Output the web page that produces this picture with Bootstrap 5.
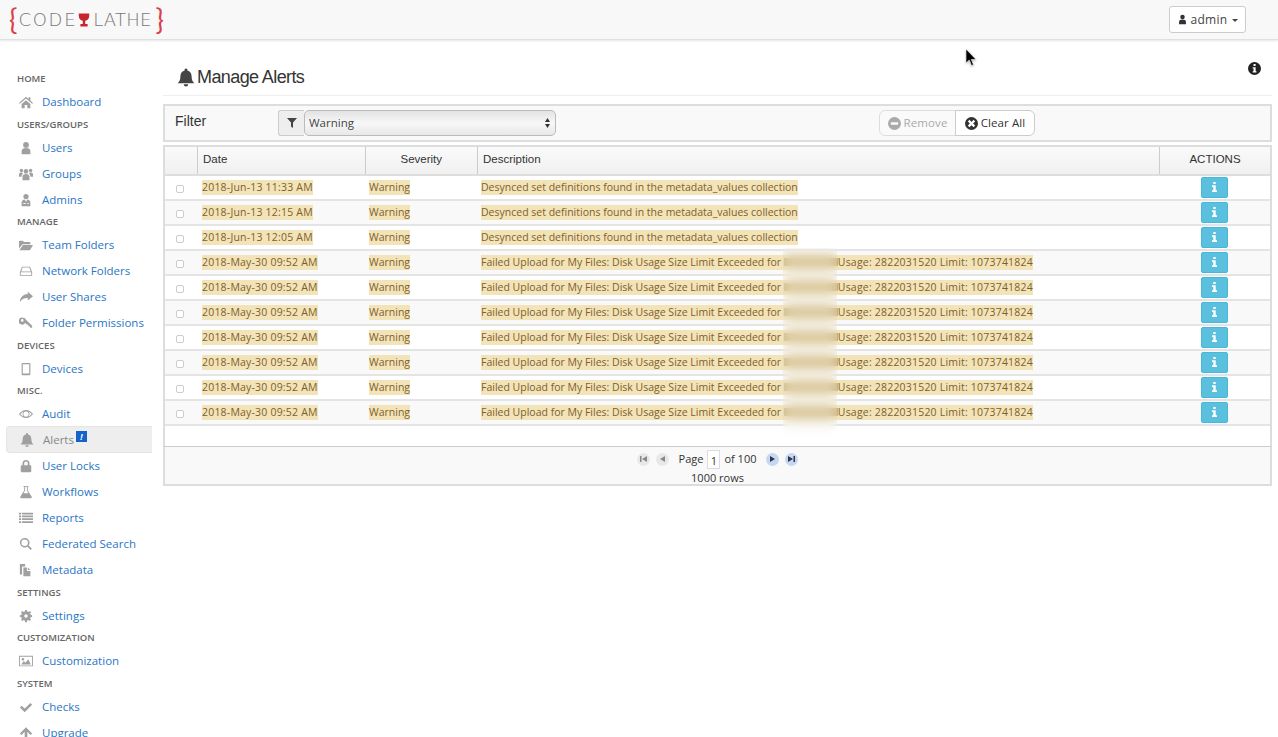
<!DOCTYPE html>
<html lang="en"><head><meta charset="utf-8"><title>Manage Alerts</title>
<link rel="stylesheet" href="https://cdn.jsdelivr.net/npm/bootstrap@5.3.0/dist/css/bootstrap.min.css">
<style>
html,body{height:737px;overflow:hidden}
body{font-family:"Open Sans",sans-serif;font-size:12px;color:#333;background:#fff;position:relative}
.topbar{height:40px;background:#f8f8f8;border-bottom:1px solid #e0e0e0;box-shadow:0 1px 2px rgba(0,0,0,.1);padding:0 32px 0 9px}
.logo{font-family:"DejaVu Sans",sans-serif;font-weight:200;font-size:18px;color:#777;line-height:1;white-space:nowrap}
.logo b{font-family:"Lato",sans-serif;font-weight:400;color:#dc3f4a;font-size:28px;position:relative;top:-1px}
.logo-a{letter-spacing:1.7px;margin-left:1px}
.logo-b{letter-spacing:.2px;margin-left:3px}
.logo svg{margin-left:1px}
.admin-btn{font-size:12px;height:27px;width:77px;padding:0;color:#444;background:#fff;border:1px solid #ccc;border-radius:3px;letter-spacing:.3px}
.admin-btn svg{width:11px;height:11px;fill:#333;margin-right:2px;vertical-align:-1px}
.caret-mark{display:inline-block;border:3.5px solid transparent;border-top-color:#444;border-bottom:0;margin-left:4px;vertical-align:2px}
.side{width:163px;flex:none;padding-top:29px}
.side-head{height:19.5px;line-height:20px;padding-left:17px;font-size:9.5px;font-weight:600;color:#666;text-transform:uppercase}
.side-link{display:flex;align-items:center;height:26px;padding:1px 0 0 19px;color:#2a76c6;text-decoration:none;font-size:11.5px}
.side-link svg{width:14px;height:14px;fill:#a0a0a0;flex:none;margin-right:9px}
.side-link.on{height:27px;margin:-1px 11px 0 6px;padding-left:13px;background:#eee;border:1px solid #e5e5e5;border-right:0;border-radius:4px 0 0 4px;color:#888}
.side-link.on svg{margin-right:9px}
.flag{background:#1463c8;color:#fff;font-size:8px;font-style:italic;font-weight:700;width:11px;height:11px;line-height:11px;text-align:center;margin:-7px 0 0 2px}
.main-col{flex:1;min-width:0;padding:0 6px 0 0}
.page-title{height:56px;border-bottom:1px solid #eee;padding:25px 0 0 14px;position:relative}
.page-title h1{font-family:"Liberation Sans",sans-serif;font-size:18px;font-weight:400;letter-spacing:-.6px;margin:0;color:#333;line-height:24px;display:flex;align-items:center;gap:2px}
.page-title h1 svg{width:18px;height:19px;fill:#444}
.info-mark{position:absolute;right:11px;top:22px;width:13px;height:13px;fill:#222}
.filter-box{height:38px;margin-top:8px;border:2px solid #ddd;background:#f9f9f9;padding:0 235px 0 10px}
.filter-label{font-family:"Liberation Sans",sans-serif;font-size:14px;width:103px;margin-top:-3px}
.funnel{width:26px;height:26px;background:#eee;border:1px solid #ccc;border-right:0;border-radius:3px 0 0 3px}
.funnel svg{width:10px;height:10px;fill:#444}
.pick{width:252px;height:26px;font-size:11.5px;padding:0 4px;color:#444;border:1px solid #bbb;border-radius:5px;background:linear-gradient(#e3e3e3,#f7f7f7 50%,#e8e8e8)}
.pick svg{width:7px;height:12px;fill:#333}
.act-btn{height:26px;font-size:11.5px;letter-spacing:.1px;padding:0;border:1px solid #ccc;background:#fff;color:#333;display:flex;align-items:center;justify-content:center;gap:3px;--bs-btn-disabled-opacity:1}
.act-btn svg{width:13px;height:13px;fill:#333}
.act-btn.off{width:77px;color:#aaa;border-color:#ddd;background:#fafafa}
.act-btn.off svg{fill:#aaa}
.act-btn.clr{width:80px}
.grid-wrap{margin-top:3px;border:2px solid #ddd;height:301px;border-bottom:0}
.alert-grid{table-layout:fixed;width:100%;margin:0;border-collapse:collapse;font-size:10.5px}
.alert-grid th{height:28px;padding:0 5px 2px 5.5px;font-family:"Liberation Sans",sans-serif;font-size:11.5px;font-weight:400;color:#333;background:linear-gradient(#fafafa,#f0f0f0);border-bottom:2px solid #ddd;border-right:1px solid #ccc;vertical-align:middle}
.alert-grid th:last-child{border-right:0;text-align:center}
.alert-grid td{height:25px;padding:0 4px;border-bottom:2px solid #e4e4e4;vertical-align:middle;white-space:nowrap;overflow:hidden;color:#7d5f2c}
.alert-grid td:nth-child(2){padding-left:5px;letter-spacing:.2px}
.alert-grid tr:nth-child(even) td{background:#f9f9f9}
.alert-grid td:first-child{padding:3px 0 0 11px}
.alert-grid td:last-child{text-align:center;padding:0 0 1px}
.hl{background:#f3e3b8;padding:0;display:inline-block;line-height:15px}
.hide{display:inline-block;width:54px;height:8px;background:#c9b27e}
.nums{letter-spacing:.2px}
.tick{display:block;width:8px;height:8px;border:1px solid #ccc;border-radius:2px;background:#fff}
.i-btn{width:27px;height:21px;padding:0;background:#5bc0de;border:1px solid #46b8da;border-radius:2px;display:inline-flex;align-items:center;justify-content:center;vertical-align:middle}
.i-btn svg{width:5px;height:10px;fill:#fff}
.grid-foot{height:40px;border:2px solid #ddd;border-top:1px solid #ccc;background:#f9f9f9;font-size:11px;color:#333}
.pager{height:24px;gap:6px}
.pg{width:13px;height:13px;border-radius:50%;background:#e8e8e8;flex:none;display:flex;align-items:center;justify-content:center}
.pg svg{width:7px;height:6px;fill:#888}
.pg.go{background:#c5d8f0}.pg.go svg{fill:#335}
.pg-box{width:13px;height:19px;border:1px solid #ddd;background:#fff;text-align:center;line-height:19px;margin:0 -2px}
.foot-count{line-height:14px}
.veil{position:absolute;left:783px;top:248px;width:54px;height:197px;backdrop-filter:blur(6px);pointer-events:none}
.pointer{position:absolute;left:966px;top:49px;width:11px;height:17px;filter:drop-shadow(0 1px 1px rgba(0,0,0,.3))}
</style></head><body>
<svg width="0" height="0" class="d-none"><defs>
<symbol id="i-home" viewBox="0 0 16 14"><path d="M8 1 0 8l1 1 7-6 7 6 1-1-3-2.6V1.500h-2v2.200zM3 9.200 8 5l5 4.200V14H9.500v-3.500h-3V14H3z"/></symbol>
<symbol id="i-user" viewBox="0 0 16 14"><circle cx="8" cy="3.500" r="3.300"/><path d="M3 14v-3.500C3 8 5 7 8 7s5 1 5 3.500V14z"/></symbol>
<symbol id="i-group" viewBox="0 0 16 14"><circle cx="8" cy="4" r="2.600"/><circle cx="2.800" cy="3" r="2"/><circle cx="13.200" cy="3" r="2"/><path d="M4 14v-4c0-2 1.500-3 4-3s4 1 4 3v4zM0 10V7c0-1 1-1.700 3-1.700.8 0 1.300.3 1.700.7C3.500 7 3 8.200 3 10zM16 10V7c0-1-1-1.700-3-1.700-.8 0-1.300.3-1.700.7 1.200 1 1.700 2.200 1.700 4z"/></symbol>
<symbol id="i-md" viewBox="0 0 16 14"><circle cx="8" cy="3" r="3"/><path d="M3 14v-4c0-2 1.500-3.300 3.500-3.500L8 9l1.500-2.500c2 .2 3.500 1.500 3.500 3.500v4zm2-2.500h2.500v-1H5zm4.500 0H11v-1H9.500z"/></symbol>
<symbol id="i-open" viewBox="0 0 16 14"><path d="M0 11V3c0-.6.400-1 1-1h3.500l1.200 1.500H12c.6 0 1 .4 1 1V6H4L0 11zM4.500 7H16l-3.500 6H.5z"/></symbol>
<symbol id="i-hdd" viewBox="0 0 16 14"><path fill-rule="evenodd" d="M3.500 2h9L15 8v4.500H1V8zm.7 1L2.500 7.500h11L11.800 3zM2 8.500v3h12v-3z"/></symbol>
<symbol id="i-share" viewBox="0 0 16 14"><path d="M10 1l6 5-6 5V8C6 8 3 9 1 13c0-5 3-9 9-9.500z"/></symbol>
<symbol id="i-key" viewBox="0 0 16 14"><path fill-rule="evenodd" d="M4.500 1a4 4 0 0 1 3.700 2.500L15 10v2.500h-2l-.5-1.500-1.500-.3L10.500 9 9 8.700 7 7a4 4 0 1 1-2.500-6zM3.700 2.500a1.500 1.500 0 1 0 0 3 1.500 1.500 0 0 0 0-3z"/></symbol>
<symbol id="i-tablet" viewBox="0 0 16 14"><path fill-rule="evenodd" d="M4 0h8c.6 0 1 .4 1 1v12c0 .6-.4 1-1 1H4c-.6 0-1-.4-1-1V1c0-.6.400-1 1-1zm.300 1.500v10.500h7.400V1.500z"/></symbol>
<symbol id="i-eye" viewBox="0 0 16 14"><path fill-rule="evenodd" d="M8 2.500c3.500 0 6.300 2 8 4.500-1.700 2.500-4.500 4.500-8 4.500S1.700 9.500 0 7c1.700-2.500 4.500-4.500 8-4.500zM8 4a3 3 0 1 0 0 6 3 3 0 0 0 0-6zM1.500 7c1.200 1.500 2.600 2.500 4 3.200C4.500 9.400 4 8.300 4 7s.5-2.400 1.500-3.200C4.100 4.500 2.700 5.500 1.500 7zm13 0c-1.200-1.500-2.600-2.500-4-3.200 1 .8 1.500 1.900 1.500 3.200s-.5 2.400-1.500 3.200c1.400-.7 2.800-1.700 4-3.200z"/></symbol>
<symbol id="i-bell" viewBox="0 0 16 16"><path d="M8 0a1.300 1.300 0 0 1 1.200 1.700C11.500 2.300 13 4.200 13 7c0 3 .8 4.500 2.500 6H.5C2.200 11.500 3 10 3 7c0-2.800 1.500-4.700 3.800-5.300A1.300 1.300 0 0 1 8 0zM6 14h4a2 2 0 0 1-4 0z"/></symbol>
<symbol id="i-lock" viewBox="0 0 16 14"><path fill-rule="evenodd" d="M8 0c2.500 0 4 1.500 4 4v2h1c.4 0 1 .4 1 1v6c0 .6-.6 1-1 1H3c-.4 0-1-.4-1-1V7c0-.6.6-1 1-1h1V4c0-2.500 1.500-4 4-4zM8 1.800C6.600 1.800 6 2.700 6 4v2h4V4c0-1.300-.6-2.200-2-2.200z"/></symbol>
<symbol id="i-flask" viewBox="0 0 16 14"><path fill-rule="evenodd" d="M5 0h6v1h-1v4l4.500 7.500c.4.800 0 1.500-1 1.500h-11c-1 0-1.400-.7-1-1.500L6 5V1H5zm2 1v4.300L5.200 8.500h5.600L9 5.300V1z"/></symbol>
<symbol id="i-list" viewBox="0 0 16 14"><path d="M0 1h2.500v2H0zm3.500 0H16v2H3.500zM0 4.200h2.500v2H0zm3.500 0H16v2H3.500zM0 7.400h2.500v2H0zm3.500 0H16v2H3.500zM0 10.600h2.500v2H0zm3.500 0H16v2H3.500z"/></symbol>
<symbol id="i-search" viewBox="0 0 16 14"><path fill-rule="evenodd" d="M6.500 0a5.500 5.500 0 0 1 4.500 8.700l3.800 3.800-1.400 1.400-3.800-3.800A5.500 5.500 0 1 1 6.500 0zm0 1.800a3.700 3.700 0 1 0 0 7.400 3.700 3.700 0 0 0 0-7.400z"/></symbol>
<symbol id="i-copy" viewBox="0 0 16 14"><path d="M1 0h6v3H4.500C4 3 3.500 3.500 3.500 4v8H1zM5 4h4v4h4v6H5zM10 4.200 13 7h-3z"/></symbol>
<symbol id="i-cog" viewBox="0 0 16 14"><path fill-rule="evenodd" d="M7 0h2l.4 1.800 1.300.5 1.600-1 1.400 1.400-1 1.600.5 1.300 1.800.4v2l-1.800.4-.5 1.300 1 1.600-1.400 1.400-1.600-1-1.300.5L9 14H7l-.4-1.800-1.300-.5-1.600 1-1.400-1.400 1-1.600-.5-1.300L1 8V6l1.800-.4.500-1.300-1-1.600 1.400-1.400 1.600 1 1.300-.5zM8 5a2 2 0 1 0 0 4 2 2 0 0 0 0-4z"/></symbol>
<symbol id="i-pic" viewBox="0 0 16 14"><path fill-rule="evenodd" d="M0 1h16v12H0zm1 1v10h14V2zm1.500 9 3-4 2 2 3-4 3 6zM4.500 3.500a1.500 1.500 0 1 1 0 3 1.500 1.500 0 0 1 0-3z"/></symbol>
<symbol id="i-ok" viewBox="0 0 16 14"><path d="M1 7.500 3 5.500l3.500 3.300L13 2.500l2 2L6.500 13z"/></symbol>
<symbol id="i-up" viewBox="0 0 16 14"><path d="M8 .5 15 7.500l-1.800 1.800-3.700-3.600V14h-3V5.700L2.800 9.300 1 7.500z"/></symbol>
<symbol id="i-info" viewBox="0 0 16 16"><path fill-rule="evenodd" d="M8 0a8 8 0 1 1 0 16A8 8 0 0 1 8 0zM6.800 2.500v2.500h2.600V2.500zM5.800 6.500v1.600h1v3.200h-1v1.600h4.600v-1.600h-1V6.500z"/></symbol>
<symbol id="i-minus" viewBox="0 0 16 16"><path fill-rule="evenodd" d="M8 0a8 8 0 1 1 0 16A8 8 0 0 1 8 0zM3.500 6.500v3h9v-3z"/></symbol>
<symbol id="i-x" viewBox="0 0 16 16"><path fill-rule="evenodd" d="M8 0a8 8 0 1 1 0 16A8 8 0 0 1 8 0zM5.500 3.500l-2 2L6 8l-2.500 2.500 2 2L8 10l2.500 2.500 2-2L10 8l2.500-2.500-2-2L8 6z"/></symbol>
<symbol id="i-funnel" viewBox="0 0 10 10"><path d="M0 0h10L6 4.500V10L4 8.500v-4z"/></symbol>
<symbol id="i-i" viewBox="0 0 5 10"><path d="M1.300 0h2.400v2H1.300zM0 3.300h3.700v5H5V10H0V8.300h1.300V5H0z"/></symbol>
<symbol id="i-first" viewBox="0 0 7 6"><path d="M0 0h1.500v6H0zM7 0v6L2 3z"/></symbol>
<symbol id="i-prev" viewBox="0 0 7 6"><path d="M6 0v6L1 3z"/></symbol>
<symbol id="i-next" viewBox="0 0 7 6"><path d="M1 0v6l5-3z"/></symbol>
<symbol id="i-last" viewBox="0 0 7 6"><path d="M0 0v6l5-3zM5.500 0H7v6H5.500z"/></symbol>
</defs></svg>

<nav class="topbar d-flex align-items-center justify-content-between">
  <div class="logo d-flex align-items-center"><b>{</b><span class="logo-a">CODE</span><svg width="12" height="14" viewBox="0 0 15 16"><path fill="#c8242e" d="M1 0h13v3c0 3-2 5.500-5 6v4h3v3H3v-3h3V9C3 8.500 1 6 1 3z"/></svg><span class="logo-b">LATHE</span><b class="ms-1">}</b></div>
  <button class="btn admin-btn" type="button"><svg><use href="#i-user"/></svg>admin<span class="caret-mark"></span></button>
</nav>

<div class="d-flex">
<aside class="side">
  <div class="side-head">Home</div>
  <a class="side-link" href="#"><svg><use href="#i-home"/></svg>Dashboard</a>
  <div class="side-head">Users/Groups</div>
  <a class="side-link" href="#"><svg><use href="#i-user"/></svg>Users</a>
  <a class="side-link" href="#"><svg><use href="#i-group"/></svg>Groups</a>
  <a class="side-link" href="#"><svg><use href="#i-md"/></svg>Admins</a>
  <div class="side-head">Manage</div>
  <a class="side-link" href="#"><svg><use href="#i-open"/></svg>Team Folders</a>
  <a class="side-link" href="#"><svg><use href="#i-hdd"/></svg>Network Folders</a>
  <a class="side-link" href="#"><svg><use href="#i-share"/></svg>User Shares</a>
  <a class="side-link" href="#"><svg><use href="#i-key"/></svg>Folder Permissions</a>
  <div class="side-head">Devices</div>
  <a class="side-link" href="#"><svg><use href="#i-tablet"/></svg>Devices</a>
  <div class="side-head">Misc.</div>
  <a class="side-link" href="#"><svg><use href="#i-eye"/></svg>Audit</a>
  <a class="side-link on" href="#"><svg><use href="#i-bell"/></svg>Alerts<span class="flag">!</span></a>
  <a class="side-link" href="#"><svg><use href="#i-lock"/></svg>User Locks</a>
  <a class="side-link" href="#"><svg><use href="#i-flask"/></svg>Workflows</a>
  <a class="side-link" href="#"><svg><use href="#i-list"/></svg>Reports</a>
  <a class="side-link" href="#"><svg><use href="#i-search"/></svg>Federated Search</a>
  <a class="side-link" href="#"><svg><use href="#i-copy"/></svg>Metadata</a>
  <div class="side-head">Settings</div>
  <a class="side-link" href="#"><svg><use href="#i-cog"/></svg>Settings</a>
  <div class="side-head">Customization</div>
  <a class="side-link" href="#"><svg><use href="#i-pic"/></svg>Customization</a>
  <div class="side-head">System</div>
  <a class="side-link" href="#"><svg><use href="#i-ok"/></svg>Checks</a>
  <a class="side-link" href="#"><svg><use href="#i-up"/></svg>Upgrade</a>
</aside>

<main class="main-col">
  <div class="page-title"><h1><svg><use href="#i-bell"/></svg>Manage Alerts</h1><svg class="info-mark"><use href="#i-info"/></svg></div>
  <div class="filter-box d-flex align-items-center justify-content-between">
    <div class="d-flex align-items-center">
      <div class="filter-label">Filter</div>
      <div class="funnel d-flex align-items-center justify-content-center"><svg><use href="#i-funnel"/></svg></div>
      <div class="pick d-flex align-items-center justify-content-between">Warning<svg viewBox="0 0 7 12"><path d="M3.500 1 6 5H1zM3.500 11 1 7h5z"/></svg></div>
    </div>
    <div class="btn-group">
      <button class="btn act-btn off" type="button" disabled><svg><use href="#i-minus"/></svg>Remove</button>
      <button class="btn act-btn clr" type="button"><svg><use href="#i-x"/></svg>Clear All</button>
    </div>
  </div>
  <div class="grid-wrap">
    <table class="alert-grid">
      <colgroup><col style="width:32px"><col style="width:168px"><col style="width:112px"><col style="width:682px"><col></colgroup>
      <thead><tr><th></th><th>Date</th><th class="text-center">Severity</th><th>Description</th><th>ACTIONS</th></tr></thead>
      <tbody id="rows"></tbody>
    </table>
  </div>
  <div class="grid-foot text-center">
    <div class="pager d-flex align-items-center justify-content-center">
      <span class="pg"><svg><use href="#i-first"/></svg></span><span class="pg me-1"><svg><use href="#i-prev"/></svg></span>
      <span>Page</span><span class="pg-box">1</span><span class="me-1">of 100</span>
      <span class="pg go"><svg><use href="#i-next"/></svg></span><span class="pg go"><svg><use href="#i-last"/></svg></span>
    </div>
    <div class="foot-count">1000 rows</div>
  </div>
</main>
</div>
<div class="veil"></div>
<svg class="pointer" viewBox="0 0 11 17"><path d="M0 0v14l3.300-3 2.200 5.500 2-.8L5.300 10.500H10z" fill="#000" stroke="#fff" stroke-width=".6"/></svg>
<script>
const desync="Desynced set definitions found in the metadata_values collection";
const fail='Failed Upload for My Files: Disk Usage Size Limit Exceeded for <span class="hide"></span><span class="nums">Usage: 2822031520 Limit: 1073741824</span>';
const data=[["2018-Jun-13 11:33 AM",desync],["2018-Jun-13 12:15 AM",desync],["2018-Jun-13 12:05 AM",desync]];
for(let i=0;i<7;i++)data.push(["2018-May-30 09:52 AM",fail]);
document.getElementById('rows').innerHTML=data.map(d=>`<tr><td><span class="tick"></span></td><td><span class="hl">${d[0]}</span></td><td><span class="hl">Warning</span></td><td><span class="hl">${d[1]}</span></td><td><button class="btn i-btn" type="button"><svg><use href="#i-i"/></svg></button></td></tr>`).join('');
</script>
<script src="https://cdn.jsdelivr.net/npm/bootstrap@5.3.0/dist/js/bootstrap.bundle.min.js"></script>
</body></html>
